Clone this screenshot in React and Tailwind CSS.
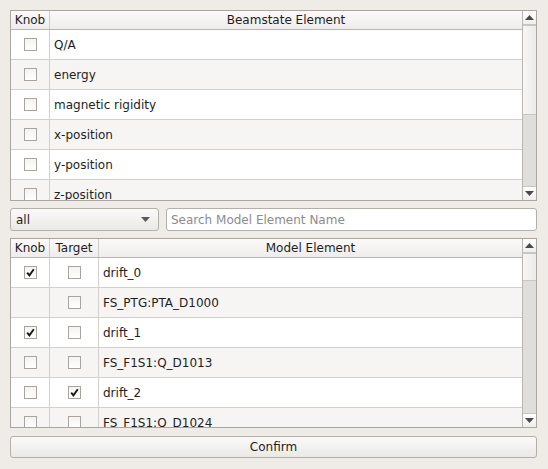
import React from "react";

const BEAM = ["Q/A", "energy", "magnetic rigidity", "x-position", "y-position", "z-position"];

const MODEL = [
  { name: "drift_0", knob: true, target: false },
  { name: "FS_PTG:PTA_D1000", knob: null, target: false },
  { name: "drift_1", knob: true, target: false },
  { name: "FS_F1S1:Q_D1013", knob: false, target: false },
  { name: "drift_2", knob: false, target: true },
  { name: "FS_F1S1:Q_D1024", knob: false, target: false },
];

function Check({ on }) {
  return (
    <div className="flex h-[13px] w-[13px] items-center justify-center border border-[#a8a49f] bg-gradient-to-b from-[#f4f3f2] to-white">
      {on && (
        <svg width="11" height="11" viewBox="0 0 11 11">
          <path d="M2.2 5.6 L4.4 8.4 L8.8 2.2" fill="none" stroke="#1a1a1a" strokeWidth="1.9" />
        </svg>
      )}
    </div>
  );
}

function Arrow({ up }) {
  return (
    <div className="flex h-[14px] items-center justify-center border-b border-t border-[#c9c6c1] bg-gradient-to-b from-white to-[#f0eeec] first:border-t-0 last:border-b-0">
      <svg width="9" height="5" viewBox="0 0 9 5">
        <path d={up ? "M0 5 L4.5 0 L9 5 Z" : "M0 0 L4.5 5 L9 0 Z"} fill="#4a4a4a" />
      </svg>
    </div>
  );
}

function ScrollBar({ handle, track }) {
  return (
    <div className="flex w-[14px] flex-col border-l border-[#b9b6b1] bg-[#e0deda]">
      <Arrow up />
      <div className={`${handle} border-y border-[#c9c6c1] bg-gradient-to-r from-[#f7f6f5] to-[#ecebe9]`} />
      <div className={track} />
      <Arrow />
    </div>
  );
}

function Header({ cols }) {
  return (
    <div className="flex h-[19px] border-b border-[#b9b6b1] bg-gradient-to-b from-[#fbfaf9] to-[#efedeb]">
      {cols.map(([label, w], i) => (
        <div key={label} className={`${w} flex items-center justify-center ${i < cols.length - 1 ? "border-r border-[#cfccc8]" : ""}`}>
          {label}
        </div>
      ))}
    </div>
  );
}

export default function App() {
  return (
    <div
      className="flex h-[469px] w-[548px] flex-col bg-[#efebe7] pb-[11px] pl-[10px] pr-[11px] pt-[10px] text-[12px] text-[#1e1e1e]"
      style={{ fontFamily: '"DejaVu Sans", Verdana, sans-serif' }}
    >
      <div className="flex h-[191px] border border-[#aaa69f] bg-white">
        <div className="flex flex-1 flex-col overflow-hidden">
          <Header cols={[["Knob", "w-[39px]"], ["Beamstate Element", "flex-1"]]} />
          {BEAM.map((b, i) => (
            <div key={b} className={`flex h-[30px] shrink-0 border-b border-[#d3d0cc] ${i % 2 ? "bg-[#f6f5f4]" : "bg-white"}`}>
              <div className="flex w-[39px] items-center justify-center border-r border-[#d3d0cc]">
                <Check />
              </div>
              <div className="flex flex-1 items-center pl-[4px]">{b}</div>
            </div>
          ))}
        </div>
        <ScrollBar handle="h-[90px]" track="flex-1" />
      </div>

      <div className="mt-[7px] flex h-[23px] gap-[7px]">
        <div className="flex w-[149px] items-center justify-between rounded-[3px] border border-[#b3afa9] bg-gradient-to-b from-[#fbfaf9] to-[#ebe9e6] pl-[5px] pr-[8px]">
          <span>all</span>
          <svg width="9" height="5" viewBox="0 0 9 5">
            <path d="M0 0 L4.5 5 L9 0 Z" fill="#5a5a5a" />
          </svg>
        </div>
        <div className="flex flex-1 items-center rounded-[3px] border border-[#b3afa9] bg-white pl-[4px] text-[#8c8c8c]">
          Search Model Element Name
        </div>
      </div>

      <div className="mt-[7px] flex h-[190px] border border-[#aaa69f] bg-white">
        <div className="flex flex-1 flex-col overflow-hidden">
          <Header cols={[["Knob", "w-[39px]"], ["Target", "w-[49px]"], ["Model Element", "flex-1"]]} />
          {MODEL.map((m, i) => (
            <div key={m.name} className={`flex h-[30px] shrink-0 border-b border-[#d3d0cc] ${i % 2 ? "bg-[#f6f5f4]" : "bg-white"}`}>
              <div className="flex w-[39px] items-center justify-center border-r border-[#d3d0cc]">
                {m.knob !== null && <Check on={m.knob} />}
              </div>
              <div className="flex w-[49px] items-center justify-center border-r border-[#d3d0cc]">
                <Check on={m.target} />
              </div>
              <div className="flex flex-1 items-center pl-[4px]">{m.name}</div>
            </div>
          ))}
        </div>
        <ScrollBar handle="h-[28px]" track="flex-1" />
      </div>

      <div className="mt-[8px] flex h-[22px] items-center justify-center rounded-[3px] border border-[#b3afa9] bg-gradient-to-b from-[#fbfaf9] to-[#ebe9e6]">
        Confirm
      </div>
    </div>
  );
}
